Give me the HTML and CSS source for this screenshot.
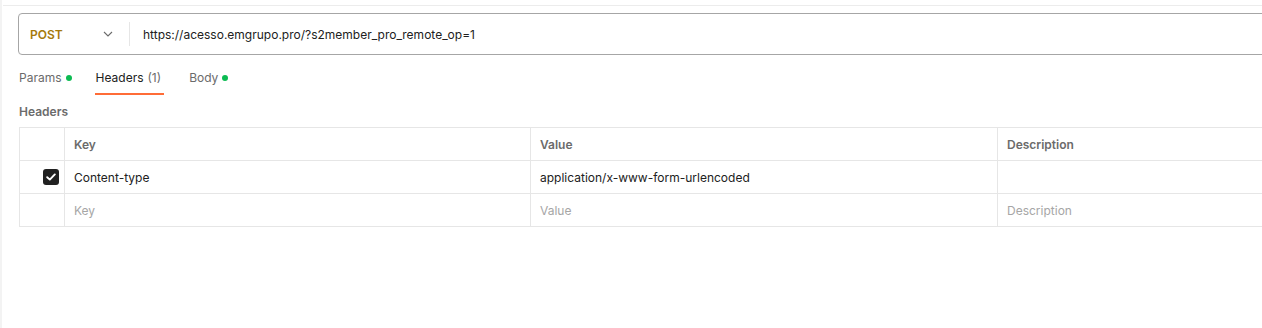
FILE: index.html
```html
<!DOCTYPE html>
<html>
<head>
<meta charset="utf-8">
<link rel="stylesheet" href="styles.css">
</head>
<body>
<div class="page">
  <div class="topline"></div>
  <div class="content">
    <div class="urlbar">
      <div class="method">
        <span class="method-name">POST</span>
        <svg class="chev" width="10" height="6" viewBox="0 0 10 6"><path d="M1 1l4 4 4-4" fill="none" stroke="#6b6b6b" stroke-width="1.1"/></svg>
      </div>
      <div class="divider"></div>
      <div class="url">https://acesso.emgrupo.pro/?s2member_pro_remote_op=1</div>
    </div>
    <div class="tabs">
      <div class="tab t-params">Params<span class="dot"></span></div>
      <div class="tab t-headers active">Headers <span class="count">(1)</span></div>
      <div class="tab">Body<span class="dot"></span></div>
    </div>
    <div class="section-title">Headers</div>
    <div class="table">
      <div class="row head">
        <div class="cell chk"></div>
        <div class="cell key">Key</div>
        <div class="cell val">Value</div>
        <div class="cell desc">Description</div>
      </div>
      <div class="row">
        <div class="cell chk"><span class="checkbox"><svg width="10" height="8" viewBox="0 0 10 8"><path d="M1.2 4.2l2.6 2.4L8.8 1.4" fill="none" stroke="#fff" stroke-width="1.9" stroke-linecap="round" stroke-linejoin="round"/></svg></span></div>
        <div class="cell key">Content-type</div>
        <div class="cell val">application/x-www-form-urlencoded</div>
        <div class="cell desc"></div>
      </div>
      <div class="row">
        <div class="cell chk"></div>
        <div class="cell key ph">Key</div>
        <div class="cell val ph">Value</div>
        <div class="cell desc ph">Description</div>
      </div>
    </div>
  </div>
</div>
</body>
</html>
```

FILE: styles.css
```css
html, body {
  margin: 0;
  padding: 0;
  background: #ffffff;
  overflow: hidden;
}
body {
  width: 1262px;
  height: 328px;
  font-family: Inter, "Noto Sans", sans-serif;
  font-size: 12px;
  color: #212121;
}
.page {
  height: 328px;
  border-left: 2px solid #f3f3f3;
  padding-top: 5px;
  box-sizing: border-box;
  overflow: hidden;
}
.topline {
  height: 1px;
  background: #ececec;
  margin-left: 1px;
}
.content {
  padding-left: 17px;
  padding-top: 7px;
}
.urlbar {
  display: flex;
  align-items: center;
  height: 40px;
  width: 1400px;
  margin-left: -1px;
  border: 1px solid #a6a6a6;
  border-radius: 4px;
}
.method {
  display: flex;
  align-items: center;
  justify-content: space-between;
  width: 110px;
  padding-left: 11px;
  padding-right: 16px;
  box-sizing: border-box;
}
.method-name {
  color: #a57a0c;
  font-weight: 600;
  font-size: 12px;
}
.chev {
  display: block;
}
.divider {
  width: 1px;
  height: 24px;
  background: #e6e6e6;
}
.url {
  padding-left: 13px;
  color: #212121;
  font-size: 12px;
}
.tabs {
  display: flex;
  margin-top: 11px;
  align-items: flex-start;
}
.tab {
  display: flex;
  align-items: flex-start;
  color: #6b6b6b;
  font-size: 12px;
  line-height: 14px;
  padding: 5px 1px 0 1px;
  height: 22px;
  margin-right: 24px;
  border-bottom: 2px solid transparent;
}
.tab.t-params {
  margin-left: -1px;
  margin-right: 22px;
}
.tab.t-headers {
  margin-right: 24px;
  padding-right: 3px;
}
.tab.active {
  color: #212121;
  border-bottom-color: #ff6c37;
}
.tab .count {
  color: #6b6b6b;
  margin-left: 4px;
}
.dot {
  width: 6px;
  height: 6px;
  border-radius: 50%;
  background: #0cbb52;
  margin-left: 4px;
  margin-top: 4px;
}
.section-title {
  margin-top: 9px;
  color: #6b6b6b;
  font-weight: 600;
  font-size: 12px;
  height: 16px;
  line-height: 16px;
}
.table {
  margin-top: 7px;
  width: 1400px;
  border-top: 1px solid #e6e6e6;
  border-left: 1px solid #e6e6e6;
}
.row {
  display: grid;
  grid-template-columns: 45px 466px 467px 1fr;
  height: 33px;
}
.cell {
  border-right: 1px solid #e6e6e6;
  border-bottom: 1px solid #e6e6e6;
  display: flex;
  align-items: center;
  padding-left: 9px;
  box-sizing: border-box;
  font-size: 12px;
  color: #212121;
}
.row.head .cell {
  color: #6b6b6b;
  font-weight: 600;
}
.cell.chk {
  justify-content: flex-end;
  padding-left: 0;
  padding-right: 5px;
}
.cell.ph {
  color: #a6a6a6;
}
.checkbox {
  width: 16px;
  height: 16px;
  background: #212121;
  border-radius: 3px;
  display: flex;
  align-items: center;
  justify-content: center;
}
```
